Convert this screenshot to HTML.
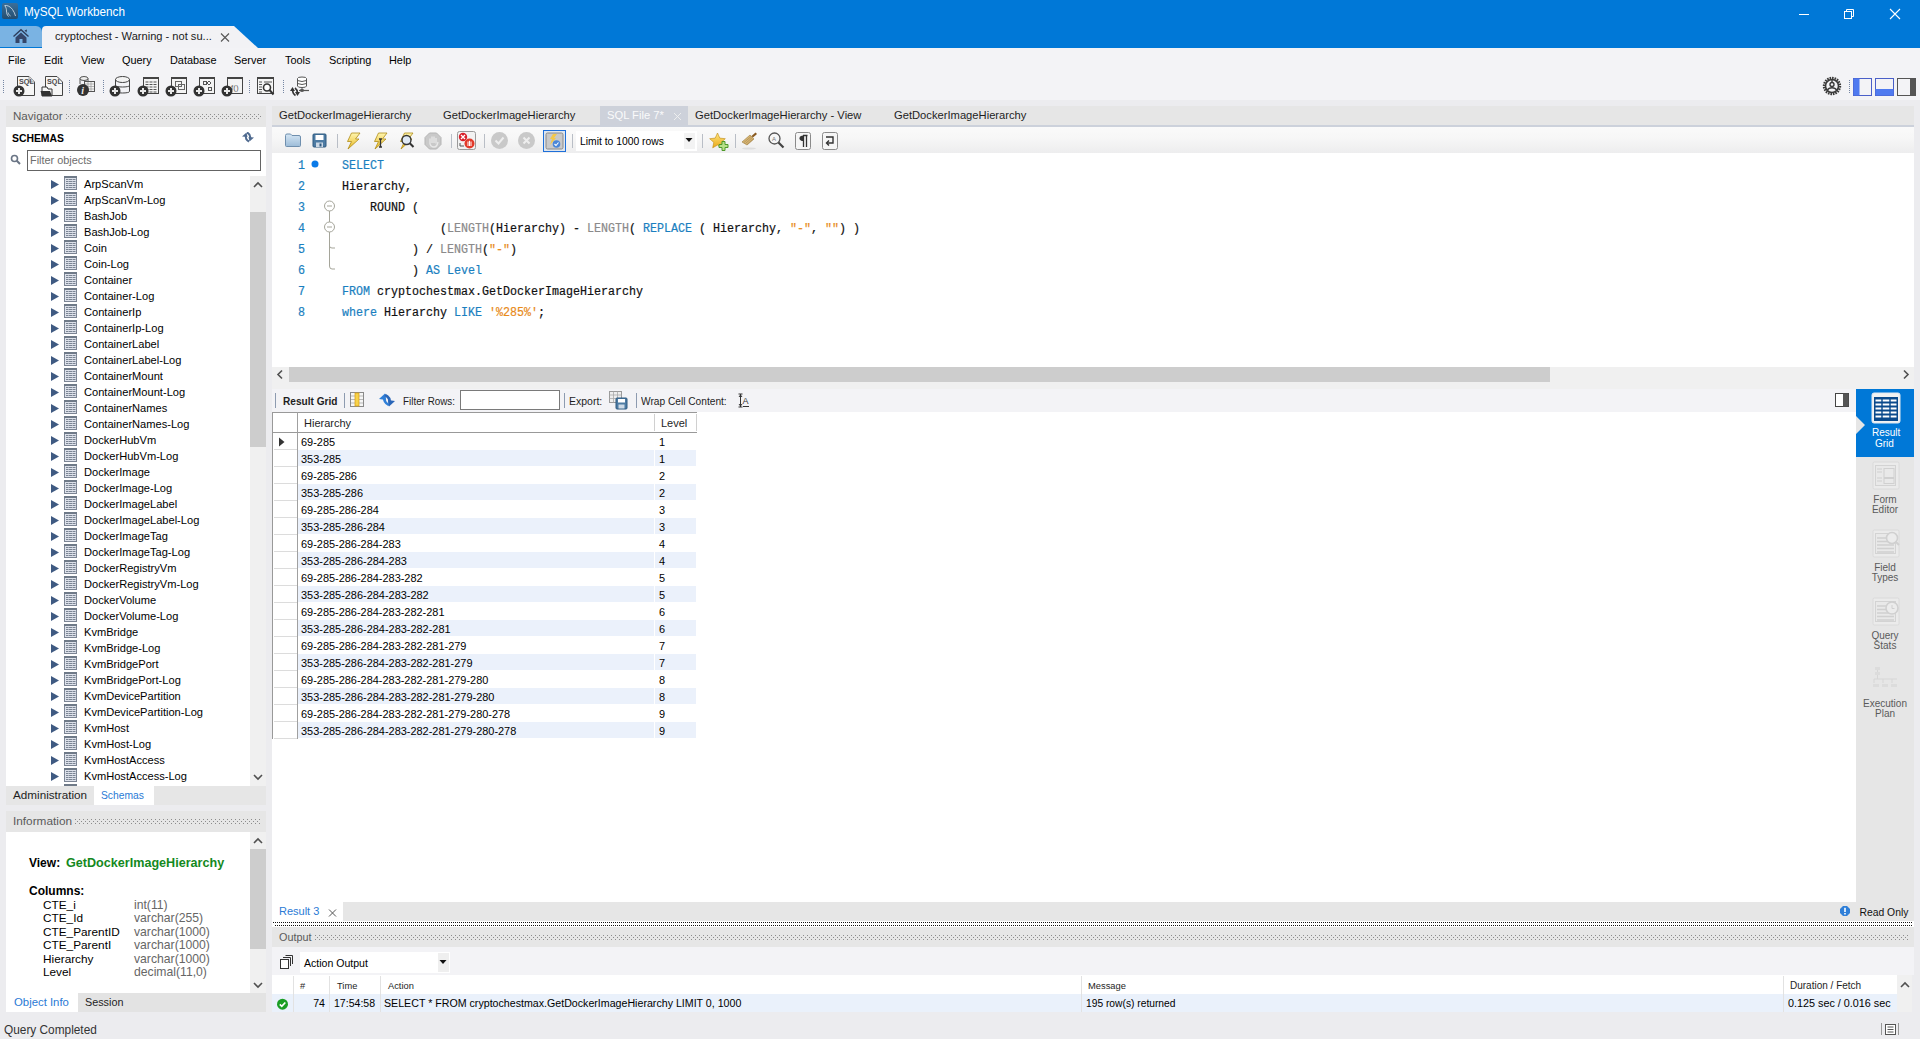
<!DOCTYPE html>
<html><head><meta charset="utf-8">
<style>
*{margin:0;padding:0;box-sizing:border-box}
html,body{width:1920px;height:1039px;overflow:hidden;background:#ececef;font-family:"Liberation Sans",sans-serif;font-size:11px;color:#000;position:relative}
.a{position:absolute}
.t{position:absolute;white-space:pre;line-height:1}
.dots{background-image:radial-gradient(circle,#b8b8b8 0.7px,transparent 0.8px);background-size:3px 3px}
</style></head><body>
<svg width="0" height="0" style="position:absolute"><defs><pattern id="dp" width="4" height="4" patternUnits="userSpaceOnUse"><rect x="0" y="0" width="1" height="1" fill="#8c8c8c"/><rect x="2" y="2" width="1" height="1" fill="#8c8c8c"/></pattern><pattern id="sd1" width="2" height="1" patternUnits="userSpaceOnUse"><rect width="1" height="1" fill="#111"/></pattern></defs></svg>
<div class="a" style="left:0px;top:0px;width:1920px;height:48px;background:#0078d7;"></div>
<svg class="a" style="left:2px;top:3px;" width="16" height="16" viewBox="0 0 16 16"><defs><linearGradient id="ai" x1="0" y1="0" x2="0" y2="1"><stop offset="0" stop-color="#3b6f9a"/><stop offset="1" stop-color="#254e6f"/></linearGradient></defs><rect x="0" y="0" width="16" height="16" rx="2" fill="url(#ai)"/><path d="M2.5 2.5C5 2 8.5 3.5 10.5 6.5C12 8.5 13 11 13.5 13M3 3C4 4.5 4.5 6 4.5 8C4.5 10 5 12 6.5 13.5M6 9.5C6.5 11 7.5 12.5 8.5 13" stroke="#dde8f0" stroke-width="0.8" fill="none"/></svg>
<div class="t" style="left:23.50px;top:6px;font-size:12.5px;color:#fff;transform:scaleX(0.938);transform-origin:0 0;">MySQL Workbench</div>
<div class="a" style="left:1799px;top:14px;width:10px;height:1px;background:#fff;"></div>
<svg class="a" style="left:1843px;top:8px;" width="12" height="12" viewBox="0 0 12 12"><rect x="1.5" y="3.5" width="7" height="7" fill="none" stroke="#fff"/><path d="M3.5 3.5V1.5H10.5V8.5H8.5" fill="none" stroke="#fff"/></svg>
<svg class="a" style="left:1889px;top:8px;" width="12" height="12" viewBox="0 0 12 12"><path d="M1 1L11 11M11 1L1 11" stroke="#fff" stroke-width="1.1"/></svg>
<div class="a" style="left:0px;top:26px;width:42px;height:21px;background:#7ab3e3;border-top-right-radius:6px"></div>
<svg class="a" style="left:12px;top:28px;" width="18" height="16" viewBox="0 0 18 16"><path d="M1.5 8.5L9 1.8L16.5 8.5" fill="none" stroke="#2d3d5c" stroke-width="1.4"/><path d="M12.5 2.5L15 1.5L14.5 4.5Z" fill="#2d3d5c"/><path d="M9 4.5L3.5 9.5V15H7.5V11H10.5V15H14.5V9.5Z" fill="#34466a"/></svg>
<div class="a" style="left:42px;top:26px;width:216px;height:22px;background:#f2f2f5;clip-path:polygon(0 0,192px 0,216px 22px,0 22px);border-top-left-radius:4px"></div>
<div class="t" style="left:55.00px;top:31px;font-size:11.1px;color:#1a1a1a;">cryptochest - Warning - not su...</div>
<svg class="a" style="left:220px;top:33px;" width="10" height="9" viewBox="0 0 10 9"><path d="M1 0.5L9 8.5M9 0.5L1 8.5" stroke="#555" stroke-width="1.1"/></svg>
<div class="a" style="left:0px;top:48px;width:1920px;height:52px;background:#f3f3f6;"></div>
<div class="t" style="left:8.00px;top:55px;font-size:10.9px;color:#000;">File</div>
<div class="t" style="left:44.00px;top:55px;font-size:10.9px;color:#000;">Edit</div>
<div class="t" style="left:81.00px;top:55px;font-size:10.9px;color:#000;">View</div>
<div class="t" style="left:122.00px;top:55px;font-size:10.9px;color:#000;">Query</div>
<div class="t" style="left:170.00px;top:55px;font-size:10.9px;color:#000;">Database</div>
<div class="t" style="left:234.00px;top:55px;font-size:10.9px;color:#000;">Server</div>
<div class="t" style="left:285.00px;top:55px;font-size:10.9px;color:#000;">Tools</div>
<div class="t" style="left:329.00px;top:55px;font-size:10.9px;color:#000;">Scripting</div>
<div class="t" style="left:389.00px;top:55px;font-size:10.9px;color:#000;">Help</div>
<div class="a" style="left:3px;top:80px;width:1px;height:14px;background-image:linear-gradient(#7586a3 50%,transparent 50%);background-size:1px 2px"></div>
<svg class="a" style="left:12px;top:75px;" width="24" height="23" viewBox="0 0 24 23"><path d="M5.5 1.5H17L22.5 7V20.5H5.5Z" fill="#f6f6f6" stroke="#444"/><path d="M17 1.5V7H22.5" fill="#ddd" stroke="#888" stroke-width="0.8"/><text x="7" y="8.5" font-family="Liberation Sans" font-size="7.2" font-weight="bold" fill="#4a4a4a" style="-webkit-font-smoothing:antialiased">SQL</text><circle cx="7" cy="16" r="5.5" fill="#333"/><path d="M4 16H10M7 13V19" stroke="#e8e8e8" stroke-width="2"/></svg>
<svg class="a" style="left:40px;top:75px;" width="24" height="23" viewBox="0 0 24 23"><path d="M5.5 1.5H17L22.5 7V20.5H5.5Z" fill="#f6f6f6" stroke="#444"/><text x="7" y="8.5" font-family="Liberation Sans" font-size="7.2" font-weight="bold" fill="#4a4a4a" style="-webkit-font-smoothing:antialiased">SQL</text><path d="M2 12H7L8 14H12V21H2Z" fill="#f6f6f6" stroke="#333"/><path d="M0.5 16H10L12 21H2Z" fill="#333"/></svg>
<div class="a" style="left:69px;top:80px;width:1px;height:14px;background-image:linear-gradient(#7586a3 50%,transparent 50%);background-size:1px 2px"></div>
<svg class="a" style="left:74px;top:75px;" width="24" height="23" viewBox="0 0 24 23"><ellipse cx="10" cy="3.5" rx="4" ry="2" fill="#eee" stroke="#555"/><path d="M6 3.5V9M14 3.5V9" stroke="#555"/><rect x="10.5" y="6.5" width="10" height="10" fill="#f4f4f4" stroke="#555"/><path d="M11 9H20M11 11.5H20M11 14H20M14 7V16M17 7V16" stroke="#999" stroke-width="0.7"/><circle cx="9" cy="15" r="6" fill="#333"/><text x="7.3" y="19" font-family="Liberation Serif" font-style="italic" font-weight="bold" font-size="10" fill="#eee">i</text></svg>
<div class="a" style="left:103px;top:80px;width:1px;height:14px;background-image:linear-gradient(#7586a3 50%,transparent 50%);background-size:1px 2px"></div>
<svg class="a" style="left:108px;top:75px;" width="24" height="23" viewBox="0 0 24 23"><ellipse cx="14.5" cy="4.5" rx="7" ry="3" fill="#f2f2f2" stroke="#444"/><path d="M7.5 4.5V16.5C7.5 18.5 21.5 18.5 21.5 16.5V4.5M7.5 10.5C7.5 12.5 21.5 12.5 21.5 10.5" fill="none" stroke="#444"/><circle cx="7" cy="16" r="5.5" fill="#333"/><path d="M4 16H10M7 13V19" stroke="#e8e8e8" stroke-width="2"/></svg>
<svg class="a" style="left:136px;top:75px;" width="24" height="23" viewBox="0 0 24 23"><rect x="7.5" y="2.5" width="15" height="16" fill="#f4f4f4" stroke="#444"/><rect x="7" y="2" width="16" height="2" fill="#444"/><path d="M9.5 7H21M9.5 9.5H21M9.5 12H21M9.5 14.5H21M9.5 17H21" stroke="#555" stroke-width="1" stroke-dasharray="3 1 3 1 3"/><circle cx="7" cy="16" r="5.5" fill="#333"/><path d="M4 16H10M7 13V19" stroke="#e8e8e8" stroke-width="2"/></svg>
<svg class="a" style="left:164px;top:75px;" width="24" height="23" viewBox="0 0 24 23"><rect x="7.5" y="2.5" width="15" height="16" fill="#f4f4f4" stroke="#444"/><rect x="7" y="2" width="16" height="2" fill="#444"/><rect x="11.5" y="6.5" width="6" height="5" fill="none" stroke="#666"/><rect x="14.5" y="9.5" width="6" height="5" fill="none" stroke="#666"/><circle cx="7" cy="16" r="5.5" fill="#333"/><path d="M4 16H10M7 13V19" stroke="#e8e8e8" stroke-width="2"/></svg>
<svg class="a" style="left:192px;top:75px;" width="24" height="23" viewBox="0 0 24 23"><rect x="7.5" y="2.5" width="15" height="16" fill="#f4f4f4" stroke="#444"/><rect x="7" y="2" width="16" height="2" fill="#444"/><rect x="11.5" y="6.5" width="3" height="3" fill="none" stroke="#555"/><path d="M17 6L19 8L17 10L15 8Z" fill="none" stroke="#555"/><rect x="16.5" y="12.5" width="3" height="3" fill="none" stroke="#555"/><circle cx="7" cy="16" r="5.5" fill="#333"/><path d="M4 16H10M7 13V19" stroke="#e8e8e8" stroke-width="2"/></svg>
<svg class="a" style="left:220px;top:75px;" width="24" height="23" viewBox="0 0 24 23"><rect x="7.5" y="2.5" width="15" height="16" fill="#f4f4f4" stroke="#444"/><rect x="7" y="2" width="16" height="2" fill="#444"/><text x="11" y="15" font-family="Liberation Sans" font-size="8" fill="#666">f()</text><circle cx="7" cy="16" r="5.5" fill="#333"/><path d="M4 16H10M7 13V19" stroke="#e8e8e8" stroke-width="2"/></svg>
<div class="a" style="left:249px;top:80px;width:1px;height:14px;background-image:linear-gradient(#7586a3 50%,transparent 50%);background-size:1px 2px"></div>
<svg class="a" style="left:254px;top:75px;" width="24" height="23" viewBox="0 0 24 23"><rect x="3.5" y="2.5" width="16" height="16" fill="#f4f4f4" stroke="#444"/><rect x="3" y="2" width="17" height="2" fill="#444"/><path d="M5 7H8M5 9.5H8M5 12H8M5 14.5H8M5 17H8M10 7H18" stroke="#555"/><circle cx="13" cy="12.5" r="3.5" fill="#fff" stroke="#333" stroke-width="1.6"/><path d="M15.5 15L19.5 19.5" stroke="#333" stroke-width="2"/></svg>
<div class="a" style="left:283px;top:80px;width:1px;height:14px;background-image:linear-gradient(#7586a3 50%,transparent 50%);background-size:1px 2px"></div>
<svg class="a" style="left:287px;top:75px;" width="24" height="23" viewBox="0 0 24 23"><path d="M10.5 3.5Q10.5 2 15 2Q19.5 2 19.5 3.5V11Q19.5 12.5 15 12.5Q10.5 12.5 10.5 11Z" fill="#fff" stroke="#555"/><path d="M10.5 5.5Q15 7.5 19.5 5.5M10.5 8.5Q15 10.5 19.5 8.5" fill="none" stroke="#555"/><path d="M15 12.5V15" stroke="#555"/><path d="M12 15.5H22" stroke="#555" stroke-width="1.2"/><ellipse cx="15" cy="15.5" rx="2.2" ry="1.4" fill="#555"/><path d="M3 16L5.5 12L8 16Z" fill="#333"/><path d="M5.5 15Q5.8 19 8.5 20.5" fill="none" stroke="#333" stroke-width="1.6"/><path d="M8 17L10.5 21L13 17Z" fill="#333"/><path d="M10.5 18Q10.2 14.5 8 13" fill="none" stroke="#333" stroke-width="1.6"/></svg>
<svg class="a" style="left:1822px;top:76px;" width="20" height="20" viewBox="0 0 20 20"><circle cx="10" cy="10" r="8" fill="none" stroke="#3a3a3a" stroke-width="2.4" stroke-dasharray="1.6 0.9"/><circle cx="10" cy="10" r="6.5" fill="none" stroke="#3a3a3a" stroke-width="1.6"/><circle cx="10" cy="8.5" r="2" fill="none" stroke="#3a3a3a" stroke-width="1.4"/><path d="M10 3.5V6.5M5.5 14C7 11 13 11 14.5 14" fill="none" stroke="#3a3a3a" stroke-width="1.4"/></svg>
<div class="a" style="left:1849px;top:80px;width:1px;height:14px;background-image:linear-gradient(#7586a3 50%,transparent 50%);background-size:1px 2px"></div>
<svg class="a" style="left:1852px;top:77px;" width="22" height="20" viewBox="0 0 22 20"><rect x="1" y="1" width="19" height="18" fill="#fff"/><rect x="1.5" y="1.5" width="18" height="17" fill="#f3f3f6" stroke="#4a5fc8"/><rect x="1.5" y="1.5" width="6" height="17" fill="#4f7af0"/></svg>
<svg class="a" style="left:1874px;top:77px;" width="22" height="20" viewBox="0 0 22 20"><rect x="1" y="1" width="19" height="18" fill="#fff"/><rect x="1.5" y="1.5" width="18" height="17" fill="#f3f3f6" stroke="#4a5fc8"/><rect x="1.5" y="12" width="18" height="6.5" fill="#4f7af0"/></svg>
<svg class="a" style="left:1896px;top:77px;" width="22" height="20" viewBox="0 0 22 20"><rect x="1" y="1" width="19" height="18" fill="#fff"/><rect x="1.5" y="1.5" width="18" height="17" fill="#f3f3f6" stroke="#555"/><rect x="14" y="1.5" width="5.5" height="17" fill="#555"/></svg>
<div class="a" style="left:6px;top:106px;width:260px;height:21px;background:#e6e6e6;"></div>
<div class="t" style="left:13.00px;top:110px;font-size:11.6px;color:#5a5a5a;">Navigator</div>
<svg class="a" style="left:65.6px;top:114px;" width="195.4" height="5" viewBox="0 0 195.4 5"><rect width="195" height="5" fill="url(#dp)"/></svg>
<div class="a" style="left:6px;top:127px;width:260px;height:659px;background:#fff;"></div>
<div class="t" style="left:12.00px;top:134px;font-size:10.4px;color:#000;font-weight:bold;">SCHEMAS</div>
<svg class="a" style="left:241px;top:132px;" width="14" height="11" viewBox="0 0 14 11"><path d="M1 4.5L5.5 0.5L6.5 5Z" fill="#4f6a8f"/><path d="M5 3.5Q4 7.5 8 9.5" fill="none" stroke="#4f6a8f" stroke-width="2"/><path d="M13 5.5L8.5 9.5L7.5 5Z" fill="#4f6a8f"/><path d="M9 6.5Q10 2.5 6 0.5" fill="none" stroke="#4f6a8f" stroke-width="2"/></svg>
<svg class="a" style="left:10px;top:154px;" width="11" height="11" viewBox="0 0 11 11"><circle cx="4.5" cy="4.5" r="3" fill="none" stroke="#6a7585" stroke-width="1.6"/><path d="M6.8 6.8L10 10" stroke="#6a7585" stroke-width="2"/></svg>
<div class="a" style="left:27px;top:150px;width:234px;height:21px;border:1px solid #646464;background:#fff"></div>
<div class="t" style="left:30.00px;top:155px;font-size:10.9px;color:#6d6d6d;">Filter objects</div>
<svg class="a" style="left:51px;top:180px;" width="9" height="10" viewBox="0 0 9 10"><path d="M0 0L8 4.5L0 9Z" fill="#3f5a82"/></svg>
<svg class="a" style="left:64px;top:176px;" width="13" height="14" viewBox="0 0 13 14"><rect x="0.5" y="0.5" width="12" height="13" fill="#dde1ea" stroke="#7c8594"/><rect x="0" y="0" width="13" height="2" fill="#6f7a88"/><path d="M2 3.5H12M2 5.5H12M2 7.5H12M2 9.5H12M2 11.5H12" stroke="#7b8594" stroke-width="1" stroke-dasharray="2.5 0.5 3 0.5 3"/></svg>
<div class="t" style="left:84.00px;top:179px;font-size:11.1px;color:#000;">ArpScanVm</div>
<svg class="a" style="left:51px;top:196px;" width="9" height="10" viewBox="0 0 9 10"><path d="M0 0L8 4.5L0 9Z" fill="#3f5a82"/></svg>
<svg class="a" style="left:64px;top:192px;" width="13" height="14" viewBox="0 0 13 14"><rect x="0.5" y="0.5" width="12" height="13" fill="#dde1ea" stroke="#7c8594"/><rect x="0" y="0" width="13" height="2" fill="#6f7a88"/><path d="M2 3.5H12M2 5.5H12M2 7.5H12M2 9.5H12M2 11.5H12" stroke="#7b8594" stroke-width="1" stroke-dasharray="2.5 0.5 3 0.5 3"/></svg>
<div class="t" style="left:84.00px;top:195px;font-size:11.1px;color:#000;">ArpScanVm-Log</div>
<svg class="a" style="left:51px;top:212px;" width="9" height="10" viewBox="0 0 9 10"><path d="M0 0L8 4.5L0 9Z" fill="#3f5a82"/></svg>
<svg class="a" style="left:64px;top:208px;" width="13" height="14" viewBox="0 0 13 14"><rect x="0.5" y="0.5" width="12" height="13" fill="#dde1ea" stroke="#7c8594"/><rect x="0" y="0" width="13" height="2" fill="#6f7a88"/><path d="M2 3.5H12M2 5.5H12M2 7.5H12M2 9.5H12M2 11.5H12" stroke="#7b8594" stroke-width="1" stroke-dasharray="2.5 0.5 3 0.5 3"/></svg>
<div class="t" style="left:84.00px;top:211px;font-size:11.1px;color:#000;">BashJob</div>
<svg class="a" style="left:51px;top:228px;" width="9" height="10" viewBox="0 0 9 10"><path d="M0 0L8 4.5L0 9Z" fill="#3f5a82"/></svg>
<svg class="a" style="left:64px;top:224px;" width="13" height="14" viewBox="0 0 13 14"><rect x="0.5" y="0.5" width="12" height="13" fill="#dde1ea" stroke="#7c8594"/><rect x="0" y="0" width="13" height="2" fill="#6f7a88"/><path d="M2 3.5H12M2 5.5H12M2 7.5H12M2 9.5H12M2 11.5H12" stroke="#7b8594" stroke-width="1" stroke-dasharray="2.5 0.5 3 0.5 3"/></svg>
<div class="t" style="left:84.00px;top:227px;font-size:11.1px;color:#000;">BashJob-Log</div>
<svg class="a" style="left:51px;top:244px;" width="9" height="10" viewBox="0 0 9 10"><path d="M0 0L8 4.5L0 9Z" fill="#3f5a82"/></svg>
<svg class="a" style="left:64px;top:240px;" width="13" height="14" viewBox="0 0 13 14"><rect x="0.5" y="0.5" width="12" height="13" fill="#dde1ea" stroke="#7c8594"/><rect x="0" y="0" width="13" height="2" fill="#6f7a88"/><path d="M2 3.5H12M2 5.5H12M2 7.5H12M2 9.5H12M2 11.5H12" stroke="#7b8594" stroke-width="1" stroke-dasharray="2.5 0.5 3 0.5 3"/></svg>
<div class="t" style="left:84.00px;top:243px;font-size:11.1px;color:#000;">Coin</div>
<svg class="a" style="left:51px;top:260px;" width="9" height="10" viewBox="0 0 9 10"><path d="M0 0L8 4.5L0 9Z" fill="#3f5a82"/></svg>
<svg class="a" style="left:64px;top:256px;" width="13" height="14" viewBox="0 0 13 14"><rect x="0.5" y="0.5" width="12" height="13" fill="#dde1ea" stroke="#7c8594"/><rect x="0" y="0" width="13" height="2" fill="#6f7a88"/><path d="M2 3.5H12M2 5.5H12M2 7.5H12M2 9.5H12M2 11.5H12" stroke="#7b8594" stroke-width="1" stroke-dasharray="2.5 0.5 3 0.5 3"/></svg>
<div class="t" style="left:84.00px;top:259px;font-size:11.1px;color:#000;">Coin-Log</div>
<svg class="a" style="left:51px;top:276px;" width="9" height="10" viewBox="0 0 9 10"><path d="M0 0L8 4.5L0 9Z" fill="#3f5a82"/></svg>
<svg class="a" style="left:64px;top:272px;" width="13" height="14" viewBox="0 0 13 14"><rect x="0.5" y="0.5" width="12" height="13" fill="#dde1ea" stroke="#7c8594"/><rect x="0" y="0" width="13" height="2" fill="#6f7a88"/><path d="M2 3.5H12M2 5.5H12M2 7.5H12M2 9.5H12M2 11.5H12" stroke="#7b8594" stroke-width="1" stroke-dasharray="2.5 0.5 3 0.5 3"/></svg>
<div class="t" style="left:84.00px;top:275px;font-size:11.1px;color:#000;">Container</div>
<svg class="a" style="left:51px;top:292px;" width="9" height="10" viewBox="0 0 9 10"><path d="M0 0L8 4.5L0 9Z" fill="#3f5a82"/></svg>
<svg class="a" style="left:64px;top:288px;" width="13" height="14" viewBox="0 0 13 14"><rect x="0.5" y="0.5" width="12" height="13" fill="#dde1ea" stroke="#7c8594"/><rect x="0" y="0" width="13" height="2" fill="#6f7a88"/><path d="M2 3.5H12M2 5.5H12M2 7.5H12M2 9.5H12M2 11.5H12" stroke="#7b8594" stroke-width="1" stroke-dasharray="2.5 0.5 3 0.5 3"/></svg>
<div class="t" style="left:84.00px;top:291px;font-size:11.1px;color:#000;">Container-Log</div>
<svg class="a" style="left:51px;top:308px;" width="9" height="10" viewBox="0 0 9 10"><path d="M0 0L8 4.5L0 9Z" fill="#3f5a82"/></svg>
<svg class="a" style="left:64px;top:304px;" width="13" height="14" viewBox="0 0 13 14"><rect x="0.5" y="0.5" width="12" height="13" fill="#dde1ea" stroke="#7c8594"/><rect x="0" y="0" width="13" height="2" fill="#6f7a88"/><path d="M2 3.5H12M2 5.5H12M2 7.5H12M2 9.5H12M2 11.5H12" stroke="#7b8594" stroke-width="1" stroke-dasharray="2.5 0.5 3 0.5 3"/></svg>
<div class="t" style="left:84.00px;top:307px;font-size:11.1px;color:#000;">ContainerIp</div>
<svg class="a" style="left:51px;top:324px;" width="9" height="10" viewBox="0 0 9 10"><path d="M0 0L8 4.5L0 9Z" fill="#3f5a82"/></svg>
<svg class="a" style="left:64px;top:320px;" width="13" height="14" viewBox="0 0 13 14"><rect x="0.5" y="0.5" width="12" height="13" fill="#dde1ea" stroke="#7c8594"/><rect x="0" y="0" width="13" height="2" fill="#6f7a88"/><path d="M2 3.5H12M2 5.5H12M2 7.5H12M2 9.5H12M2 11.5H12" stroke="#7b8594" stroke-width="1" stroke-dasharray="2.5 0.5 3 0.5 3"/></svg>
<div class="t" style="left:84.00px;top:323px;font-size:11.1px;color:#000;">ContainerIp-Log</div>
<svg class="a" style="left:51px;top:340px;" width="9" height="10" viewBox="0 0 9 10"><path d="M0 0L8 4.5L0 9Z" fill="#3f5a82"/></svg>
<svg class="a" style="left:64px;top:336px;" width="13" height="14" viewBox="0 0 13 14"><rect x="0.5" y="0.5" width="12" height="13" fill="#dde1ea" stroke="#7c8594"/><rect x="0" y="0" width="13" height="2" fill="#6f7a88"/><path d="M2 3.5H12M2 5.5H12M2 7.5H12M2 9.5H12M2 11.5H12" stroke="#7b8594" stroke-width="1" stroke-dasharray="2.5 0.5 3 0.5 3"/></svg>
<div class="t" style="left:84.00px;top:339px;font-size:11.1px;color:#000;">ContainerLabel</div>
<svg class="a" style="left:51px;top:356px;" width="9" height="10" viewBox="0 0 9 10"><path d="M0 0L8 4.5L0 9Z" fill="#3f5a82"/></svg>
<svg class="a" style="left:64px;top:352px;" width="13" height="14" viewBox="0 0 13 14"><rect x="0.5" y="0.5" width="12" height="13" fill="#dde1ea" stroke="#7c8594"/><rect x="0" y="0" width="13" height="2" fill="#6f7a88"/><path d="M2 3.5H12M2 5.5H12M2 7.5H12M2 9.5H12M2 11.5H12" stroke="#7b8594" stroke-width="1" stroke-dasharray="2.5 0.5 3 0.5 3"/></svg>
<div class="t" style="left:84.00px;top:355px;font-size:11.1px;color:#000;">ContainerLabel-Log</div>
<svg class="a" style="left:51px;top:372px;" width="9" height="10" viewBox="0 0 9 10"><path d="M0 0L8 4.5L0 9Z" fill="#3f5a82"/></svg>
<svg class="a" style="left:64px;top:368px;" width="13" height="14" viewBox="0 0 13 14"><rect x="0.5" y="0.5" width="12" height="13" fill="#dde1ea" stroke="#7c8594"/><rect x="0" y="0" width="13" height="2" fill="#6f7a88"/><path d="M2 3.5H12M2 5.5H12M2 7.5H12M2 9.5H12M2 11.5H12" stroke="#7b8594" stroke-width="1" stroke-dasharray="2.5 0.5 3 0.5 3"/></svg>
<div class="t" style="left:84.00px;top:371px;font-size:11.1px;color:#000;">ContainerMount</div>
<svg class="a" style="left:51px;top:388px;" width="9" height="10" viewBox="0 0 9 10"><path d="M0 0L8 4.5L0 9Z" fill="#3f5a82"/></svg>
<svg class="a" style="left:64px;top:384px;" width="13" height="14" viewBox="0 0 13 14"><rect x="0.5" y="0.5" width="12" height="13" fill="#dde1ea" stroke="#7c8594"/><rect x="0" y="0" width="13" height="2" fill="#6f7a88"/><path d="M2 3.5H12M2 5.5H12M2 7.5H12M2 9.5H12M2 11.5H12" stroke="#7b8594" stroke-width="1" stroke-dasharray="2.5 0.5 3 0.5 3"/></svg>
<div class="t" style="left:84.00px;top:387px;font-size:11.1px;color:#000;">ContainerMount-Log</div>
<svg class="a" style="left:51px;top:404px;" width="9" height="10" viewBox="0 0 9 10"><path d="M0 0L8 4.5L0 9Z" fill="#3f5a82"/></svg>
<svg class="a" style="left:64px;top:400px;" width="13" height="14" viewBox="0 0 13 14"><rect x="0.5" y="0.5" width="12" height="13" fill="#dde1ea" stroke="#7c8594"/><rect x="0" y="0" width="13" height="2" fill="#6f7a88"/><path d="M2 3.5H12M2 5.5H12M2 7.5H12M2 9.5H12M2 11.5H12" stroke="#7b8594" stroke-width="1" stroke-dasharray="2.5 0.5 3 0.5 3"/></svg>
<div class="t" style="left:84.00px;top:403px;font-size:11.1px;color:#000;">ContainerNames</div>
<svg class="a" style="left:51px;top:420px;" width="9" height="10" viewBox="0 0 9 10"><path d="M0 0L8 4.5L0 9Z" fill="#3f5a82"/></svg>
<svg class="a" style="left:64px;top:416px;" width="13" height="14" viewBox="0 0 13 14"><rect x="0.5" y="0.5" width="12" height="13" fill="#dde1ea" stroke="#7c8594"/><rect x="0" y="0" width="13" height="2" fill="#6f7a88"/><path d="M2 3.5H12M2 5.5H12M2 7.5H12M2 9.5H12M2 11.5H12" stroke="#7b8594" stroke-width="1" stroke-dasharray="2.5 0.5 3 0.5 3"/></svg>
<div class="t" style="left:84.00px;top:419px;font-size:11.1px;color:#000;">ContainerNames-Log</div>
<svg class="a" style="left:51px;top:436px;" width="9" height="10" viewBox="0 0 9 10"><path d="M0 0L8 4.5L0 9Z" fill="#3f5a82"/></svg>
<svg class="a" style="left:64px;top:432px;" width="13" height="14" viewBox="0 0 13 14"><rect x="0.5" y="0.5" width="12" height="13" fill="#dde1ea" stroke="#7c8594"/><rect x="0" y="0" width="13" height="2" fill="#6f7a88"/><path d="M2 3.5H12M2 5.5H12M2 7.5H12M2 9.5H12M2 11.5H12" stroke="#7b8594" stroke-width="1" stroke-dasharray="2.5 0.5 3 0.5 3"/></svg>
<div class="t" style="left:84.00px;top:435px;font-size:11.1px;color:#000;">DockerHubVm</div>
<svg class="a" style="left:51px;top:452px;" width="9" height="10" viewBox="0 0 9 10"><path d="M0 0L8 4.5L0 9Z" fill="#3f5a82"/></svg>
<svg class="a" style="left:64px;top:448px;" width="13" height="14" viewBox="0 0 13 14"><rect x="0.5" y="0.5" width="12" height="13" fill="#dde1ea" stroke="#7c8594"/><rect x="0" y="0" width="13" height="2" fill="#6f7a88"/><path d="M2 3.5H12M2 5.5H12M2 7.5H12M2 9.5H12M2 11.5H12" stroke="#7b8594" stroke-width="1" stroke-dasharray="2.5 0.5 3 0.5 3"/></svg>
<div class="t" style="left:84.00px;top:451px;font-size:11.1px;color:#000;">DockerHubVm-Log</div>
<svg class="a" style="left:51px;top:468px;" width="9" height="10" viewBox="0 0 9 10"><path d="M0 0L8 4.5L0 9Z" fill="#3f5a82"/></svg>
<svg class="a" style="left:64px;top:464px;" width="13" height="14" viewBox="0 0 13 14"><rect x="0.5" y="0.5" width="12" height="13" fill="#dde1ea" stroke="#7c8594"/><rect x="0" y="0" width="13" height="2" fill="#6f7a88"/><path d="M2 3.5H12M2 5.5H12M2 7.5H12M2 9.5H12M2 11.5H12" stroke="#7b8594" stroke-width="1" stroke-dasharray="2.5 0.5 3 0.5 3"/></svg>
<div class="t" style="left:84.00px;top:467px;font-size:11.1px;color:#000;">DockerImage</div>
<svg class="a" style="left:51px;top:484px;" width="9" height="10" viewBox="0 0 9 10"><path d="M0 0L8 4.5L0 9Z" fill="#3f5a82"/></svg>
<svg class="a" style="left:64px;top:480px;" width="13" height="14" viewBox="0 0 13 14"><rect x="0.5" y="0.5" width="12" height="13" fill="#dde1ea" stroke="#7c8594"/><rect x="0" y="0" width="13" height="2" fill="#6f7a88"/><path d="M2 3.5H12M2 5.5H12M2 7.5H12M2 9.5H12M2 11.5H12" stroke="#7b8594" stroke-width="1" stroke-dasharray="2.5 0.5 3 0.5 3"/></svg>
<div class="t" style="left:84.00px;top:483px;font-size:11.1px;color:#000;">DockerImage-Log</div>
<svg class="a" style="left:51px;top:500px;" width="9" height="10" viewBox="0 0 9 10"><path d="M0 0L8 4.5L0 9Z" fill="#3f5a82"/></svg>
<svg class="a" style="left:64px;top:496px;" width="13" height="14" viewBox="0 0 13 14"><rect x="0.5" y="0.5" width="12" height="13" fill="#dde1ea" stroke="#7c8594"/><rect x="0" y="0" width="13" height="2" fill="#6f7a88"/><path d="M2 3.5H12M2 5.5H12M2 7.5H12M2 9.5H12M2 11.5H12" stroke="#7b8594" stroke-width="1" stroke-dasharray="2.5 0.5 3 0.5 3"/></svg>
<div class="t" style="left:84.00px;top:499px;font-size:11.1px;color:#000;">DockerImageLabel</div>
<svg class="a" style="left:51px;top:516px;" width="9" height="10" viewBox="0 0 9 10"><path d="M0 0L8 4.5L0 9Z" fill="#3f5a82"/></svg>
<svg class="a" style="left:64px;top:512px;" width="13" height="14" viewBox="0 0 13 14"><rect x="0.5" y="0.5" width="12" height="13" fill="#dde1ea" stroke="#7c8594"/><rect x="0" y="0" width="13" height="2" fill="#6f7a88"/><path d="M2 3.5H12M2 5.5H12M2 7.5H12M2 9.5H12M2 11.5H12" stroke="#7b8594" stroke-width="1" stroke-dasharray="2.5 0.5 3 0.5 3"/></svg>
<div class="t" style="left:84.00px;top:515px;font-size:11.1px;color:#000;">DockerImageLabel-Log</div>
<svg class="a" style="left:51px;top:532px;" width="9" height="10" viewBox="0 0 9 10"><path d="M0 0L8 4.5L0 9Z" fill="#3f5a82"/></svg>
<svg class="a" style="left:64px;top:528px;" width="13" height="14" viewBox="0 0 13 14"><rect x="0.5" y="0.5" width="12" height="13" fill="#dde1ea" stroke="#7c8594"/><rect x="0" y="0" width="13" height="2" fill="#6f7a88"/><path d="M2 3.5H12M2 5.5H12M2 7.5H12M2 9.5H12M2 11.5H12" stroke="#7b8594" stroke-width="1" stroke-dasharray="2.5 0.5 3 0.5 3"/></svg>
<div class="t" style="left:84.00px;top:531px;font-size:11.1px;color:#000;">DockerImageTag</div>
<svg class="a" style="left:51px;top:548px;" width="9" height="10" viewBox="0 0 9 10"><path d="M0 0L8 4.5L0 9Z" fill="#3f5a82"/></svg>
<svg class="a" style="left:64px;top:544px;" width="13" height="14" viewBox="0 0 13 14"><rect x="0.5" y="0.5" width="12" height="13" fill="#dde1ea" stroke="#7c8594"/><rect x="0" y="0" width="13" height="2" fill="#6f7a88"/><path d="M2 3.5H12M2 5.5H12M2 7.5H12M2 9.5H12M2 11.5H12" stroke="#7b8594" stroke-width="1" stroke-dasharray="2.5 0.5 3 0.5 3"/></svg>
<div class="t" style="left:84.00px;top:547px;font-size:11.1px;color:#000;">DockerImageTag-Log</div>
<svg class="a" style="left:51px;top:564px;" width="9" height="10" viewBox="0 0 9 10"><path d="M0 0L8 4.5L0 9Z" fill="#3f5a82"/></svg>
<svg class="a" style="left:64px;top:560px;" width="13" height="14" viewBox="0 0 13 14"><rect x="0.5" y="0.5" width="12" height="13" fill="#dde1ea" stroke="#7c8594"/><rect x="0" y="0" width="13" height="2" fill="#6f7a88"/><path d="M2 3.5H12M2 5.5H12M2 7.5H12M2 9.5H12M2 11.5H12" stroke="#7b8594" stroke-width="1" stroke-dasharray="2.5 0.5 3 0.5 3"/></svg>
<div class="t" style="left:84.00px;top:563px;font-size:11.1px;color:#000;">DockerRegistryVm</div>
<svg class="a" style="left:51px;top:580px;" width="9" height="10" viewBox="0 0 9 10"><path d="M0 0L8 4.5L0 9Z" fill="#3f5a82"/></svg>
<svg class="a" style="left:64px;top:576px;" width="13" height="14" viewBox="0 0 13 14"><rect x="0.5" y="0.5" width="12" height="13" fill="#dde1ea" stroke="#7c8594"/><rect x="0" y="0" width="13" height="2" fill="#6f7a88"/><path d="M2 3.5H12M2 5.5H12M2 7.5H12M2 9.5H12M2 11.5H12" stroke="#7b8594" stroke-width="1" stroke-dasharray="2.5 0.5 3 0.5 3"/></svg>
<div class="t" style="left:84.00px;top:579px;font-size:11.1px;color:#000;">DockerRegistryVm-Log</div>
<svg class="a" style="left:51px;top:596px;" width="9" height="10" viewBox="0 0 9 10"><path d="M0 0L8 4.5L0 9Z" fill="#3f5a82"/></svg>
<svg class="a" style="left:64px;top:592px;" width="13" height="14" viewBox="0 0 13 14"><rect x="0.5" y="0.5" width="12" height="13" fill="#dde1ea" stroke="#7c8594"/><rect x="0" y="0" width="13" height="2" fill="#6f7a88"/><path d="M2 3.5H12M2 5.5H12M2 7.5H12M2 9.5H12M2 11.5H12" stroke="#7b8594" stroke-width="1" stroke-dasharray="2.5 0.5 3 0.5 3"/></svg>
<div class="t" style="left:84.00px;top:595px;font-size:11.1px;color:#000;">DockerVolume</div>
<svg class="a" style="left:51px;top:612px;" width="9" height="10" viewBox="0 0 9 10"><path d="M0 0L8 4.5L0 9Z" fill="#3f5a82"/></svg>
<svg class="a" style="left:64px;top:608px;" width="13" height="14" viewBox="0 0 13 14"><rect x="0.5" y="0.5" width="12" height="13" fill="#dde1ea" stroke="#7c8594"/><rect x="0" y="0" width="13" height="2" fill="#6f7a88"/><path d="M2 3.5H12M2 5.5H12M2 7.5H12M2 9.5H12M2 11.5H12" stroke="#7b8594" stroke-width="1" stroke-dasharray="2.5 0.5 3 0.5 3"/></svg>
<div class="t" style="left:84.00px;top:611px;font-size:11.1px;color:#000;">DockerVolume-Log</div>
<svg class="a" style="left:51px;top:628px;" width="9" height="10" viewBox="0 0 9 10"><path d="M0 0L8 4.5L0 9Z" fill="#3f5a82"/></svg>
<svg class="a" style="left:64px;top:624px;" width="13" height="14" viewBox="0 0 13 14"><rect x="0.5" y="0.5" width="12" height="13" fill="#dde1ea" stroke="#7c8594"/><rect x="0" y="0" width="13" height="2" fill="#6f7a88"/><path d="M2 3.5H12M2 5.5H12M2 7.5H12M2 9.5H12M2 11.5H12" stroke="#7b8594" stroke-width="1" stroke-dasharray="2.5 0.5 3 0.5 3"/></svg>
<div class="t" style="left:84.00px;top:627px;font-size:11.1px;color:#000;">KvmBridge</div>
<svg class="a" style="left:51px;top:644px;" width="9" height="10" viewBox="0 0 9 10"><path d="M0 0L8 4.5L0 9Z" fill="#3f5a82"/></svg>
<svg class="a" style="left:64px;top:640px;" width="13" height="14" viewBox="0 0 13 14"><rect x="0.5" y="0.5" width="12" height="13" fill="#dde1ea" stroke="#7c8594"/><rect x="0" y="0" width="13" height="2" fill="#6f7a88"/><path d="M2 3.5H12M2 5.5H12M2 7.5H12M2 9.5H12M2 11.5H12" stroke="#7b8594" stroke-width="1" stroke-dasharray="2.5 0.5 3 0.5 3"/></svg>
<div class="t" style="left:84.00px;top:643px;font-size:11.1px;color:#000;">KvmBridge-Log</div>
<svg class="a" style="left:51px;top:660px;" width="9" height="10" viewBox="0 0 9 10"><path d="M0 0L8 4.5L0 9Z" fill="#3f5a82"/></svg>
<svg class="a" style="left:64px;top:656px;" width="13" height="14" viewBox="0 0 13 14"><rect x="0.5" y="0.5" width="12" height="13" fill="#dde1ea" stroke="#7c8594"/><rect x="0" y="0" width="13" height="2" fill="#6f7a88"/><path d="M2 3.5H12M2 5.5H12M2 7.5H12M2 9.5H12M2 11.5H12" stroke="#7b8594" stroke-width="1" stroke-dasharray="2.5 0.5 3 0.5 3"/></svg>
<div class="t" style="left:84.00px;top:659px;font-size:11.1px;color:#000;">KvmBridgePort</div>
<svg class="a" style="left:51px;top:676px;" width="9" height="10" viewBox="0 0 9 10"><path d="M0 0L8 4.5L0 9Z" fill="#3f5a82"/></svg>
<svg class="a" style="left:64px;top:672px;" width="13" height="14" viewBox="0 0 13 14"><rect x="0.5" y="0.5" width="12" height="13" fill="#dde1ea" stroke="#7c8594"/><rect x="0" y="0" width="13" height="2" fill="#6f7a88"/><path d="M2 3.5H12M2 5.5H12M2 7.5H12M2 9.5H12M2 11.5H12" stroke="#7b8594" stroke-width="1" stroke-dasharray="2.5 0.5 3 0.5 3"/></svg>
<div class="t" style="left:84.00px;top:675px;font-size:11.1px;color:#000;">KvmBridgePort-Log</div>
<svg class="a" style="left:51px;top:692px;" width="9" height="10" viewBox="0 0 9 10"><path d="M0 0L8 4.5L0 9Z" fill="#3f5a82"/></svg>
<svg class="a" style="left:64px;top:688px;" width="13" height="14" viewBox="0 0 13 14"><rect x="0.5" y="0.5" width="12" height="13" fill="#dde1ea" stroke="#7c8594"/><rect x="0" y="0" width="13" height="2" fill="#6f7a88"/><path d="M2 3.5H12M2 5.5H12M2 7.5H12M2 9.5H12M2 11.5H12" stroke="#7b8594" stroke-width="1" stroke-dasharray="2.5 0.5 3 0.5 3"/></svg>
<div class="t" style="left:84.00px;top:691px;font-size:11.1px;color:#000;">KvmDevicePartition</div>
<svg class="a" style="left:51px;top:708px;" width="9" height="10" viewBox="0 0 9 10"><path d="M0 0L8 4.5L0 9Z" fill="#3f5a82"/></svg>
<svg class="a" style="left:64px;top:704px;" width="13" height="14" viewBox="0 0 13 14"><rect x="0.5" y="0.5" width="12" height="13" fill="#dde1ea" stroke="#7c8594"/><rect x="0" y="0" width="13" height="2" fill="#6f7a88"/><path d="M2 3.5H12M2 5.5H12M2 7.5H12M2 9.5H12M2 11.5H12" stroke="#7b8594" stroke-width="1" stroke-dasharray="2.5 0.5 3 0.5 3"/></svg>
<div class="t" style="left:84.00px;top:707px;font-size:11.1px;color:#000;">KvmDevicePartition-Log</div>
<svg class="a" style="left:51px;top:724px;" width="9" height="10" viewBox="0 0 9 10"><path d="M0 0L8 4.5L0 9Z" fill="#3f5a82"/></svg>
<svg class="a" style="left:64px;top:720px;" width="13" height="14" viewBox="0 0 13 14"><rect x="0.5" y="0.5" width="12" height="13" fill="#dde1ea" stroke="#7c8594"/><rect x="0" y="0" width="13" height="2" fill="#6f7a88"/><path d="M2 3.5H12M2 5.5H12M2 7.5H12M2 9.5H12M2 11.5H12" stroke="#7b8594" stroke-width="1" stroke-dasharray="2.5 0.5 3 0.5 3"/></svg>
<div class="t" style="left:84.00px;top:723px;font-size:11.1px;color:#000;">KvmHost</div>
<svg class="a" style="left:51px;top:740px;" width="9" height="10" viewBox="0 0 9 10"><path d="M0 0L8 4.5L0 9Z" fill="#3f5a82"/></svg>
<svg class="a" style="left:64px;top:736px;" width="13" height="14" viewBox="0 0 13 14"><rect x="0.5" y="0.5" width="12" height="13" fill="#dde1ea" stroke="#7c8594"/><rect x="0" y="0" width="13" height="2" fill="#6f7a88"/><path d="M2 3.5H12M2 5.5H12M2 7.5H12M2 9.5H12M2 11.5H12" stroke="#7b8594" stroke-width="1" stroke-dasharray="2.5 0.5 3 0.5 3"/></svg>
<div class="t" style="left:84.00px;top:739px;font-size:11.1px;color:#000;">KvmHost-Log</div>
<svg class="a" style="left:51px;top:756px;" width="9" height="10" viewBox="0 0 9 10"><path d="M0 0L8 4.5L0 9Z" fill="#3f5a82"/></svg>
<svg class="a" style="left:64px;top:752px;" width="13" height="14" viewBox="0 0 13 14"><rect x="0.5" y="0.5" width="12" height="13" fill="#dde1ea" stroke="#7c8594"/><rect x="0" y="0" width="13" height="2" fill="#6f7a88"/><path d="M2 3.5H12M2 5.5H12M2 7.5H12M2 9.5H12M2 11.5H12" stroke="#7b8594" stroke-width="1" stroke-dasharray="2.5 0.5 3 0.5 3"/></svg>
<div class="t" style="left:84.00px;top:755px;font-size:11.1px;color:#000;">KvmHostAccess</div>
<svg class="a" style="left:51px;top:772px;" width="9" height="10" viewBox="0 0 9 10"><path d="M0 0L8 4.5L0 9Z" fill="#3f5a82"/></svg>
<svg class="a" style="left:64px;top:768px;" width="13" height="14" viewBox="0 0 13 14"><rect x="0.5" y="0.5" width="12" height="13" fill="#dde1ea" stroke="#7c8594"/><rect x="0" y="0" width="13" height="2" fill="#6f7a88"/><path d="M2 3.5H12M2 5.5H12M2 7.5H12M2 9.5H12M2 11.5H12" stroke="#7b8594" stroke-width="1" stroke-dasharray="2.5 0.5 3 0.5 3"/></svg>
<div class="t" style="left:84.00px;top:771px;font-size:11.1px;color:#000;">KvmHostAccess-Log</div>
<div class="a" style="left:64px;top:784px;width:14px;height:2px;overflow:hidden"><svg width="13" height="14" style="display:block"><rect x="0.5" y="0.5" width="12" height="13" fill="#dde1ea" stroke="#7c8594"/><rect x="0" y="0" width="13" height="2" fill="#6f7a88"/><path d="M2 3.5H12M2 5.5H12M2 7.5H12M2 9.5H12M2 11.5H12" stroke="#7b8594" stroke-width="1" stroke-dasharray="2.5 0.5 3 0.5 3"/></svg></div>
<div class="a" style="left:250px;top:176px;width:16px;height:610px;background:#f0f0f0;"></div>
<div class="a" style="left:250px;top:212px;width:16px;height:235px;background:#cdcdcd;"></div>
<svg class="a" style="left:252px;top:180px;" width="12" height="10" viewBox="0 0 12 10"><path d="M2 7L6 3L10 7" fill="none" stroke="#505050" stroke-width="1.6"/></svg>
<svg class="a" style="left:252px;top:772px;" width="12" height="10" viewBox="0 0 12 10"><path d="M2 3L6 7L10 3" fill="none" stroke="#505050" stroke-width="1.6"/></svg>
<div class="a" style="left:6px;top:786px;width:260px;height:19px;background:#e6e6e6;"></div>
<div class="t" style="left:13.00px;top:789px;font-size:11.7px;color:#1e1e1e;">Administration</div>
<div class="a" style="left:94px;top:786px;width:60px;height:19px;background:#fff;"></div>
<div class="t" style="left:101.00px;top:791px;font-size:10.3px;color:#2a7ad5;">Schemas</div>
<div class="a" style="left:6px;top:811px;width:260px;height:21px;background:#e6e6e6;"></div>
<div class="t" style="left:13.00px;top:816px;font-size:11.8px;color:#5a5a5a;">Information</div>
<svg class="a" style="left:75px;top:819px;" width="186" height="5" viewBox="0 0 186 5"><rect width="186" height="5" fill="url(#dp)"/></svg>
<div class="a" style="left:6px;top:832px;width:244px;height:161px;background:#fff;"></div>
<div class="a" style="left:250px;top:832px;width:16px;height:161px;background:#f0f0f0;"></div>
<div class="a" style="left:250px;top:849px;width:16px;height:100px;background:#cdcdcd;"></div>
<svg class="a" style="left:252px;top:836px;" width="12" height="10" viewBox="0 0 12 10"><path d="M2 7L6 3L10 7" fill="none" stroke="#505050" stroke-width="1.6"/></svg>
<svg class="a" style="left:252px;top:980px;" width="12" height="10" viewBox="0 0 12 10"><path d="M2 3L6 7L10 3" fill="none" stroke="#505050" stroke-width="1.6"/></svg>
<div class="t" style="left:29.00px;top:857px;font-size:12.0px;color:#000;font-weight:bold;">View:</div>
<div class="t" style="left:66.00px;top:857px;font-size:12.6px;color:#14891e;font-weight:bold;">GetDockerImageHierarchy</div>
<div class="t" style="left:29.00px;top:885px;font-size:12.0px;color:#000;font-weight:bold;">Columns:</div>
<div class="t" style="left:43.00px;top:900px;font-size:11.8px;color:#000;">CTE_i</div>
<div class="t" style="left:134.00px;top:899px;font-size:12.2px;color:#666;">int(11)</div>
<div class="t" style="left:43.00px;top:913px;font-size:11.8px;color:#000;">CTE_Id</div>
<div class="t" style="left:134.00px;top:912px;font-size:12.2px;color:#666;">varchar(255)</div>
<div class="t" style="left:43.00px;top:927px;font-size:11.8px;color:#000;">CTE_ParentID</div>
<div class="t" style="left:134.00px;top:926px;font-size:12.2px;color:#666;">varchar(1000)</div>
<div class="t" style="left:43.00px;top:940px;font-size:11.8px;color:#000;">CTE_ParentI</div>
<div class="t" style="left:134.00px;top:939px;font-size:12.2px;color:#666;">varchar(1000)</div>
<div class="t" style="left:43.00px;top:954px;font-size:11.8px;color:#000;">Hierarchy</div>
<div class="t" style="left:134.00px;top:953px;font-size:12.2px;color:#666;">varchar(1000)</div>
<div class="t" style="left:43.00px;top:967px;font-size:11.8px;color:#000;">Level</div>
<div class="t" style="left:134.00px;top:966px;font-size:12.2px;color:#666;">decimal(11,0)</div>
<div class="a" style="left:6px;top:993px;width:260px;height:19px;background:#e3e3e3;"></div>
<div class="a" style="left:6px;top:993px;width:72px;height:19px;background:#fff;"></div>
<div class="t" style="left:14.00px;top:997px;font-size:11.35px;color:#2a7ad5;">Object Info</div>
<div class="t" style="left:85.00px;top:997px;font-size:10.8px;color:#1e1e1e;">Session</div>
<div class="t" style="left:4.00px;top:1025px;font-size:11.85px;color:#333;">Query Completed</div>
<div class="a" style="left:272px;top:106px;width:1642px;height:19px;background:#e6e6e6;"></div>
<div class="a" style="left:272px;top:125px;width:1642px;height:2px;background:#ccd1db;"></div>
<div class="t" style="left:279.00px;top:110px;font-size:11.2px;color:#1e1e1e;">GetDockerImageHierarchy</div>
<div class="t" style="left:443.00px;top:110px;font-size:11.2px;color:#1e1e1e;">GetDockerImageHierarchy</div>
<div class="t" style="left:695.00px;top:110px;font-size:11.2px;color:#1e1e1e;">GetDockerImageHierarchy - View</div>
<div class="t" style="left:894.00px;top:110px;font-size:11.2px;color:#1e1e1e;">GetDockerImageHierarchy</div>
<div class="a" style="left:600px;top:106px;width:88px;height:19px;background:#cdd1da;"></div>
<div class="t" style="left:607.00px;top:110px;font-size:11.2px;color:#fafafa;">SQL File 7*</div>
<svg class="a" style="left:673px;top:112px;" width="9" height="9" viewBox="0 0 9 9"><path d="M1 1L8 8M8 1L1 8" stroke="#f0f0f0" stroke-width="0.9"/></svg>
<div class="a" style="left:272px;top:127px;width:1642px;height:26px;background:linear-gradient(#fafafa,#f7f7f7 40%,#ededee);"></div>
<svg class="a" style="left:284px;top:132px;" width="18" height="16" viewBox="0 0 18 16"><path d="M1.5 3.5Q1.5 2 3 2H6.5L8 3.5H15Q16.5 3.5 16.5 5V13.5Q16.5 14.5 15.5 14.5H2.5Q1.5 14.5 1.5 13.5Z" fill="url(#fg)" stroke="#6f8fae"/><defs><linearGradient id="fg" x1="0" y1="0" x2="0" y2="1"><stop offset="0" stop-color="#d5e6f4"/><stop offset="1" stop-color="#9cbcd8"/></linearGradient></defs></svg>
<svg class="a" style="left:312px;top:133px;" width="15" height="15" viewBox="0 0 15 15"><rect x="1" y="1" width="13" height="13" rx="1" fill="#4d7ba3" stroke="#2f5a80"/><rect x="3.5" y="2" width="8" height="5" fill="#fff"/><rect x="4" y="9.5" width="7" height="4.5" fill="#ccd9e6"/><rect x="7.5" y="10.5" width="2" height="3" fill="#2f5a80"/></svg>
<div class="a" style="left:337px;top:134px;width:1px;height:14px;background:#b9bec6;"></div>
<svg class="a" style="left:344px;top:132px;" width="17" height="18" viewBox="0 0 17 18"><path d="M7.5 1H16L11.5 7H15L4 17L7.5 9.5H3.5Z" fill="url(#bg1)" stroke="#b08d18" stroke-width="0.8"/><defs><linearGradient id="bg1" x1="0" y1="0" x2="0" y2="1"><stop offset="0" stop-color="#fff6b0"/><stop offset="1" stop-color="#e8b820"/></linearGradient></defs></svg>
<svg class="a" style="left:371px;top:132px;" width="17" height="18" viewBox="0 0 17 18"><path d="M7.5 1H16L11.5 7H15L4 17L7.5 9.5H3.5Z" fill="url(#bg2)" stroke="#b08d18" stroke-width="0.8"/><defs><linearGradient id="bg2" x1="0" y1="0" x2="0" y2="1"><stop offset="0" stop-color="#fff6b0"/><stop offset="1" stop-color="#e8b820"/></linearGradient></defs><path d="M8 7H11M9.5 7V15M8 15H11" stroke="#333" stroke-width="1.3"/></svg>
<svg class="a" style="left:397px;top:132px;" width="20" height="18" viewBox="0 0 20 18"><path d="M7.5 1H16L11.5 7H15L4 17L7.5 9.5H3.5Z" fill="url(#bg3)" stroke="#b08d18" stroke-width="0.8"/><defs><linearGradient id="bg3" x1="0" y1="0" x2="0" y2="1"><stop offset="0" stop-color="#fff6b0"/><stop offset="1" stop-color="#e8b820"/></linearGradient></defs><circle cx="9.5" cy="8" r="4.5" fill="#dfe9f5" stroke="#333" stroke-width="1.4"/><path d="M12.8 11.3L16.5 15" stroke="#333" stroke-width="2"/></svg>
<svg class="a" style="left:424px;top:132px;" width="18" height="18" viewBox="0 0 18 18"><path d="M5.5 1H12.5L17 5.5V12.5L12.5 17H5.5L1 12.5V5.5Z" fill="#c9c9c9" stroke="#b5b5b5"/><path d="M6 12V6.5M8 11V4.5M10 11V4.5M12 11.5V6M6 12Q7 15 10 15Q13 15 14 10" fill="none" stroke="#e8e8e8" stroke-width="1.3"/></svg>
<div class="a" style="left:451px;top:134px;width:1px;height:14px;background:#b9bec6;"></div>
<svg class="a" style="left:457px;top:131px;" width="19" height="19" viewBox="0 0 19 19"><rect x="0.5" y="0.5" width="18" height="18" rx="2" fill="#f2f2f2" stroke="#9a9a9a"/><circle cx="6" cy="6" r="4.2" fill="#d9202a"/><path d="M4 4L8 8M8 4L4 8" stroke="#fff" stroke-width="1.3"/><circle cx="12.5" cy="12.5" r="5" fill="#e23a2a"/><path d="M11 15V10.5M12.5 15V9.8M14 15V10.5" stroke="#fff" stroke-width="1"/><path d="M3 12V15H7" fill="none" stroke="#555"/></svg>
<div class="a" style="left:484px;top:134px;width:1px;height:14px;background:#b9bec6;"></div>
<svg class="a" style="left:490px;top:131px;" width="19" height="19" viewBox="0 0 19 19"><circle cx="9.5" cy="9.5" r="8.5" fill="#c9c9c9"/><path d="M5.5 9.5L8.5 12.5L13.5 6.5" fill="none" stroke="#eee" stroke-width="2"/></svg>
<svg class="a" style="left:517px;top:131px;" width="19" height="19" viewBox="0 0 19 19"><circle cx="9.5" cy="9.5" r="8.5" fill="#c9c9c9"/><path d="M6.5 6.5L12.5 12.5M12.5 6.5L6.5 12.5" stroke="#eee" stroke-width="2"/></svg>
<svg class="a" style="left:543px;top:130px;" width="24" height="22" viewBox="0 0 24 22"><rect x="0.5" y="0.5" width="22" height="21" fill="#dfe6ee" stroke="#1e6fd9"/><rect x="3" y="3" width="17" height="16" rx="1.5" fill="#c9c9c9" stroke="#8a8a8a"/><path d="M10 4H14L11 8H13L7 15L9 9H7Z" fill="#f3c84a"/><circle cx="13.5" cy="14" r="3.8" fill="#4a86d8"/><path d="M11.5 14L13 15.5L15.5 12.5" fill="none" stroke="#fff" stroke-width="1.1"/></svg>
<div class="a" style="left:572px;top:134px;width:1px;height:14px;background:#b9bec6;"></div>
<div class="a" style="left:576px;top:131px;width:121px;height:20px;background:#fff;"></div>
<div class="a" style="left:684px;top:133px;width:11px;height:16px;background:#f3f3f3;"></div>
<div class="t" style="left:580.00px;top:137px;font-size:10.35px;color:#000;">Limit to 1000 rows</div>
<svg class="a" style="left:685px;top:137px;" width="8" height="6" viewBox="0 0 8 6"><path d="M0.5 1H7.5L4 5Z" fill="#111"/></svg>
<div class="a" style="left:702px;top:134px;width:1px;height:14px;background:#b9bec6;"></div>
<svg class="a" style="left:709px;top:131px;" width="20" height="20" viewBox="0 0 20 20"><defs><linearGradient id="sg" x1="0" y1="0" x2="0" y2="1"><stop offset="0" stop-color="#ffe680"/><stop offset="1" stop-color="#e8a818"/></linearGradient></defs><path d="M8.5 2L10.8 7.1L16.3 7.7L12.2 11.4L13.3 16.8L8.5 14.1L3.7 16.8L4.8 11.4L0.7 7.7L6.2 7.1Z" fill="url(#sg)" stroke="#c08a10" stroke-width="0.6"/><path d="M13 10.5H16V13.5H19V16.5H16V19.5H13V16.5H10V13.5H13Z" fill="#b8e08a" stroke="#4f9a2a" stroke-width="1"/></svg>
<div class="a" style="left:735px;top:134px;width:1px;height:14px;background:#b9bec6;"></div>
<svg class="a" style="left:741px;top:131px;" width="19" height="19" viewBox="0 0 19 19"><path d="M1 11L9 4L13 8L6 14Z" fill="#d6b574" stroke="#9a7a3a" stroke-width="0.6"/><path d="M3 11.5L10 5.5M4.5 12.5L11 6.8M6 13.5L12 8" stroke="#a8844a" stroke-width="0.6"/><path d="M10.5 5L14.5 1.5L16 3L12 6.5" fill="#8a5a20"/><ellipse cx="8" cy="17.5" rx="7" ry="0.9" fill="#ddd"/></svg>
<svg class="a" style="left:767px;top:131px;" width="19" height="19" viewBox="0 0 19 19"><circle cx="7.5" cy="7.5" r="5.5" fill="#f6f6f6" stroke="#555" stroke-width="1.3"/><text x="5" y="10" font-family="Liberation Sans" font-size="6" fill="#777">A</text><path d="M11.5 11.5L16.5 16.5" stroke="#444" stroke-width="2.2"/></svg>
<svg class="a" style="left:795px;top:131px;" width="17" height="20" viewBox="0 0 17 20"><rect x="0.5" y="1.5" width="15" height="17" rx="2" fill="#f6f6f6" stroke="#8a8a8a"/><path d="M8 4.5H12.5M8.5 4.5V16M11.5 4.5V16" stroke="#333" stroke-width="1.3"/><path d="M8.5 4.5Q4.5 4.5 4.5 7.2Q4.5 10 8.5 10Z" fill="#333"/></svg>
<svg class="a" style="left:822px;top:131px;" width="17" height="20" viewBox="0 0 17 20"><rect x="0.5" y="1.5" width="15" height="17" rx="2" fill="#f6f6f6" stroke="#8a8a8a"/><path d="M4 6H11V12H5" fill="none" stroke="#333" stroke-width="1.4"/><path d="M7 9.5L4.5 12L7 14.5" fill="none" stroke="#333" stroke-width="1.4"/></svg>
<div class="a" style="left:272px;top:153px;width:1642px;height:214px;background:#fff;"></div>
<div class="t" style="left:297.50px;top:160px;font-size:12.5px;color:#1a7fc0;font-family:'Liberation Mono',monospace;transform:scaleX(0.9333);transform-origin:0 0;-webkit-text-stroke:0.2px currentColor;">1</div>
<div class="t" style="left:297.50px;top:181px;font-size:12.5px;color:#1a7fc0;font-family:'Liberation Mono',monospace;transform:scaleX(0.9333);transform-origin:0 0;-webkit-text-stroke:0.2px currentColor;">2</div>
<div class="t" style="left:297.50px;top:202px;font-size:12.5px;color:#1a7fc0;font-family:'Liberation Mono',monospace;transform:scaleX(0.9333);transform-origin:0 0;-webkit-text-stroke:0.2px currentColor;">3</div>
<div class="t" style="left:297.50px;top:223px;font-size:12.5px;color:#1a7fc0;font-family:'Liberation Mono',monospace;transform:scaleX(0.9333);transform-origin:0 0;-webkit-text-stroke:0.2px currentColor;">4</div>
<div class="t" style="left:297.50px;top:244px;font-size:12.5px;color:#1a7fc0;font-family:'Liberation Mono',monospace;transform:scaleX(0.9333);transform-origin:0 0;-webkit-text-stroke:0.2px currentColor;">5</div>
<div class="t" style="left:297.50px;top:265px;font-size:12.5px;color:#1a7fc0;font-family:'Liberation Mono',monospace;transform:scaleX(0.9333);transform-origin:0 0;-webkit-text-stroke:0.2px currentColor;">6</div>
<div class="t" style="left:297.50px;top:286px;font-size:12.5px;color:#1a7fc0;font-family:'Liberation Mono',monospace;transform:scaleX(0.9333);transform-origin:0 0;-webkit-text-stroke:0.2px currentColor;">7</div>
<div class="t" style="left:297.50px;top:307px;font-size:12.5px;color:#1a7fc0;font-family:'Liberation Mono',monospace;transform:scaleX(0.9333);transform-origin:0 0;-webkit-text-stroke:0.2px currentColor;">8</div>
<svg class="a" style="left:311px;top:160px;" width="8" height="8" viewBox="0 0 8 8"><circle cx="4" cy="4" r="3.5" fill="#0a7ae8"/></svg>
<svg class="a" style="left:322px;top:198px;" width="16" height="76" viewBox="0 0 16 76"><circle cx="7.5" cy="8" r="5" fill="#fff" stroke="#a5a59a"/><path d="M5 8H10" stroke="#a5a59a"/><circle cx="7.5" cy="29" r="5" fill="#fff" stroke="#a5a59a"/><path d="M5 29H10" stroke="#a5a59a"/><path d="M7.5 13V24M7.5 34V68Q7.5 71 10 71H13M7.5 48Q7.5 50 10 50H13" fill="none" stroke="#a5a59a"/></svg>
<div class="t" style="left:342.00px;top:160px;font-size:12.5px;color:#1a7fc0;font-family:'Liberation Mono',monospace;transform:scaleX(0.9333);transform-origin:0 0;-webkit-text-stroke:0.2px currentColor;">SELECT</div>
<div class="t" style="left:342.00px;top:181px;font-size:12.5px;color:#101010;font-family:'Liberation Mono',monospace;transform:scaleX(0.9333);transform-origin:0 0;-webkit-text-stroke:0.2px currentColor;">Hierarchy,</div>
<div class="t" style="left:342.00px;top:202px;font-size:12.5px;color:#101010;font-family:'Liberation Mono',monospace;transform:scaleX(0.9333);transform-origin:0 0;-webkit-text-stroke:0.2px currentColor;">    ROUND (</div>
<div class="t" style="left:342.00px;top:223px;font-size:12.5px;color:#101010;font-family:'Liberation Mono',monospace;transform:scaleX(0.9333);transform-origin:0 0;-webkit-text-stroke:0.2px currentColor;">              (</div>
<div class="t" style="left:447.00px;top:223px;font-size:12.5px;color:#8a8a8a;font-family:'Liberation Mono',monospace;transform:scaleX(0.9333);transform-origin:0 0;-webkit-text-stroke:0.2px currentColor;">LENGTH</div>
<div class="t" style="left:489.00px;top:223px;font-size:12.5px;color:#101010;font-family:'Liberation Mono',monospace;transform:scaleX(0.9333);transform-origin:0 0;-webkit-text-stroke:0.2px currentColor;">(Hierarchy) - </div>
<div class="t" style="left:587.00px;top:223px;font-size:12.5px;color:#8a8a8a;font-family:'Liberation Mono',monospace;transform:scaleX(0.9333);transform-origin:0 0;-webkit-text-stroke:0.2px currentColor;">LENGTH</div>
<div class="t" style="left:629.00px;top:223px;font-size:12.5px;color:#101010;font-family:'Liberation Mono',monospace;transform:scaleX(0.9333);transform-origin:0 0;-webkit-text-stroke:0.2px currentColor;">( </div>
<div class="t" style="left:643.00px;top:223px;font-size:12.5px;color:#1a7fc0;font-family:'Liberation Mono',monospace;transform:scaleX(0.9333);transform-origin:0 0;-webkit-text-stroke:0.2px currentColor;">REPLACE</div>
<div class="t" style="left:692.00px;top:223px;font-size:12.5px;color:#101010;font-family:'Liberation Mono',monospace;transform:scaleX(0.9333);transform-origin:0 0;-webkit-text-stroke:0.2px currentColor;"> ( Hierarchy, </div>
<div class="t" style="left:790.00px;top:223px;font-size:12.5px;color:#e88a1a;font-family:'Liberation Mono',monospace;transform:scaleX(0.9333);transform-origin:0 0;-webkit-text-stroke:0.2px currentColor;">&quot;-&quot;</div>
<div class="t" style="left:811.00px;top:223px;font-size:12.5px;color:#101010;font-family:'Liberation Mono',monospace;transform:scaleX(0.9333);transform-origin:0 0;-webkit-text-stroke:0.2px currentColor;">, </div>
<div class="t" style="left:825.00px;top:223px;font-size:12.5px;color:#e88a1a;font-family:'Liberation Mono',monospace;transform:scaleX(0.9333);transform-origin:0 0;-webkit-text-stroke:0.2px currentColor;">&quot;&quot;</div>
<div class="t" style="left:839.00px;top:223px;font-size:12.5px;color:#101010;font-family:'Liberation Mono',monospace;transform:scaleX(0.9333);transform-origin:0 0;-webkit-text-stroke:0.2px currentColor;">) )</div>
<div class="t" style="left:342.00px;top:244px;font-size:12.5px;color:#101010;font-family:'Liberation Mono',monospace;transform:scaleX(0.9333);transform-origin:0 0;-webkit-text-stroke:0.2px currentColor;">          ) / </div>
<div class="t" style="left:440.00px;top:244px;font-size:12.5px;color:#8a8a8a;font-family:'Liberation Mono',monospace;transform:scaleX(0.9333);transform-origin:0 0;-webkit-text-stroke:0.2px currentColor;">LENGTH</div>
<div class="t" style="left:482.00px;top:244px;font-size:12.5px;color:#101010;font-family:'Liberation Mono',monospace;transform:scaleX(0.9333);transform-origin:0 0;-webkit-text-stroke:0.2px currentColor;">(</div>
<div class="t" style="left:489.00px;top:244px;font-size:12.5px;color:#e88a1a;font-family:'Liberation Mono',monospace;transform:scaleX(0.9333);transform-origin:0 0;-webkit-text-stroke:0.2px currentColor;">&quot;-&quot;</div>
<div class="t" style="left:510.00px;top:244px;font-size:12.5px;color:#101010;font-family:'Liberation Mono',monospace;transform:scaleX(0.9333);transform-origin:0 0;-webkit-text-stroke:0.2px currentColor;">)</div>
<div class="t" style="left:342.00px;top:265px;font-size:12.5px;color:#101010;font-family:'Liberation Mono',monospace;transform:scaleX(0.9333);transform-origin:0 0;-webkit-text-stroke:0.2px currentColor;">          ) </div>
<div class="t" style="left:426.00px;top:265px;font-size:12.5px;color:#1a7fc0;font-family:'Liberation Mono',monospace;transform:scaleX(0.9333);transform-origin:0 0;-webkit-text-stroke:0.2px currentColor;">AS Level</div>
<div class="t" style="left:342.00px;top:286px;font-size:12.5px;color:#1a7fc0;font-family:'Liberation Mono',monospace;transform:scaleX(0.9333);transform-origin:0 0;-webkit-text-stroke:0.2px currentColor;">FROM</div>
<div class="t" style="left:370.00px;top:286px;font-size:12.5px;color:#101010;font-family:'Liberation Mono',monospace;transform:scaleX(0.9333);transform-origin:0 0;-webkit-text-stroke:0.2px currentColor;"> cryptochestmax.GetDockerImageHierarchy</div>
<div class="t" style="left:342.00px;top:307px;font-size:12.5px;color:#1a7fc0;font-family:'Liberation Mono',monospace;transform:scaleX(0.9333);transform-origin:0 0;-webkit-text-stroke:0.2px currentColor;">where</div>
<div class="t" style="left:377.00px;top:307px;font-size:12.5px;color:#101010;font-family:'Liberation Mono',monospace;transform:scaleX(0.9333);transform-origin:0 0;-webkit-text-stroke:0.2px currentColor;"> Hierarchy </div>
<div class="t" style="left:454.00px;top:307px;font-size:12.5px;color:#1a7fc0;font-family:'Liberation Mono',monospace;transform:scaleX(0.9333);transform-origin:0 0;-webkit-text-stroke:0.2px currentColor;">LIKE</div>
<div class="t" style="left:489.00px;top:307px;font-size:12.5px;color:#e88a1a;font-family:'Liberation Mono',monospace;transform:scaleX(0.9333);transform-origin:0 0;-webkit-text-stroke:0.2px currentColor;">&#x27;%285%&#x27;</div>
<div class="t" style="left:538.00px;top:307px;font-size:12.5px;color:#101010;font-family:'Liberation Mono',monospace;transform:scaleX(0.9333);transform-origin:0 0;-webkit-text-stroke:0.2px currentColor;">;</div>
<div class="a" style="left:272px;top:367px;width:1642px;height:22px;background:#f0f0f0;"></div>
<div class="a" style="left:289px;top:367px;width:1261px;height:15px;background:#cdcdcd;"></div>
<svg class="a" style="left:275px;top:369px;" width="10" height="11" viewBox="0 0 10 11"><path d="M7 1.5L3 5.5L7 9.5" fill="none" stroke="#505050" stroke-width="1.6"/></svg>
<svg class="a" style="left:1901px;top:369px;" width="10" height="11" viewBox="0 0 10 11"><path d="M3 1.5L7 5.5L3 9.5" fill="none" stroke="#505050" stroke-width="1.6"/></svg>
<div class="a" style="left:272px;top:389px;width:1584px;height:23px;background:#f3f3f6;"></div>
<div class="a" style="left:275px;top:393px;width:1px;height:15px;background:#8d9bb0;"></div>
<div class="t" style="left:283.00px;top:397px;font-size:10.1px;color:#1e1e1e;font-weight:bold;">Result Grid</div>
<div class="a" style="left:344px;top:393px;width:1px;height:15px;background:#8d9bb0;"></div>
<svg class="a" style="left:350px;top:392px;" width="15" height="16" viewBox="0 0 15 16"><rect x="0.5" y="0.5" width="13" height="14" fill="#f6f6f6" stroke="#8a8a8a"/><path d="M1 4H13M1 7.5H13M1 11H13" stroke="#aaa" stroke-width="0.8"/><rect x="5" y="1" width="4" height="13" fill="#f7d24a" stroke="#d49a10" stroke-width="0.7"/></svg>
<svg class="a" style="left:378px;top:392px;" width="18" height="16" viewBox="0 0 18 16"><path d="M1 7L7 1.5L8 8Z" fill="#2f7fd8"/><path d="M6.5 5Q5.5 10.5 11 13" fill="none" stroke="#2f7fd8" stroke-width="2.6"/><path d="M17 9L11 14.5L10 8Z" fill="#2a66b8"/><path d="M11.5 11Q12.5 5.5 7 3" fill="none" stroke="#2a66b8" stroke-width="2.6"/></svg>
<div class="t" style="left:403.00px;top:396px;font-size:11.0px;color:#1e1e1e;transform:scaleX(0.8956);transform-origin:0 0;">Filter Rows:</div>
<div class="a" style="left:460px;top:390px;width:100px;height:20px;border:1px solid #7a7a7a;background:#fff"></div>
<div class="a" style="left:564px;top:393px;width:1px;height:15px;background:#8d9bb0;"></div>
<div class="t" style="left:569.00px;top:396px;font-size:11.0px;color:#1e1e1e;transform:scaleX(0.9527);transform-origin:0 0;">Export:</div>
<svg class="a" style="left:609px;top:391px;" width="20" height="19" viewBox="0 0 20 19"><rect x="0.5" y="0.5" width="12" height="11" fill="#eee" stroke="#9a9a9a"/><path d="M0.5 4H12.5M0.5 7.5H12.5M4.5 0.5V11.5M8.5 0.5V11.5" stroke="#aaa" stroke-width="0.8"/><rect x="7" y="7" width="11" height="11" rx="1" fill="#4d7ba3" stroke="#2f5a80"/><rect x="9" y="8" width="7" height="3.5" fill="#fff"/><rect x="9.5" y="13.5" width="6" height="4" fill="#ccd9e6"/></svg>
<div class="a" style="left:636px;top:393px;width:1px;height:15px;background:#8d9bb0;"></div>
<div class="t" style="left:641.00px;top:396px;font-size:11.0px;color:#1e1e1e;transform:scaleX(0.9242);transform-origin:0 0;">Wrap Cell Content:</div>
<svg class="a" style="left:736px;top:393px;" width="14" height="15" viewBox="0 0 14 15"><path d="M2.5 1H6.5M4.5 1V14M2.5 14H6.5M3 4L4.5 2L6 4M3 11L4.5 13L6 11" fill="none" stroke="#333" stroke-width="1"/><text x="6.5" y="11" font-family="Liberation Sans" font-size="9" fill="#333">A</text><path d="M7 13.5H13" stroke="#333"/></svg>
<svg class="a" style="left:1834px;top:392px;" width="16" height="16" viewBox="0 0 16 16"><rect x="1.5" y="1.5" width="13" height="13" fill="#fff" stroke="#444"/><rect x="9" y="1.5" width="5.5" height="13" fill="#555"/></svg>
<div class="a" style="left:272px;top:412px;width:1584px;height:490px;background:#fff;"></div>
<div class="a" style="left:272px;top:412px;width:425px;height:1px;background:#999;"></div>
<div class="a" style="left:272px;top:432px;width:425px;height:1px;background:#999;"></div>
<div class="a" style="left:272px;top:412px;width:1px;height:327px;background:#999;"></div>
<div class="a" style="left:297px;top:412px;width:1px;height:327px;background:#a0a0a0;"></div>
<div class="a" style="left:654px;top:414px;width:1px;height:17px;background:#d0d0d0;"></div>
<div class="a" style="left:696px;top:414px;width:1px;height:17px;background:#d0d0d0;"></div>
<div class="t" style="left:304.00px;top:418px;font-size:11.0px;color:#1e1e1e;">Hierarchy</div>
<div class="t" style="left:661.00px;top:418px;font-size:11.0px;color:#1e1e1e;">Level</div>
<div class="a" style="left:274px;top:449px;width:23px;height:1px;background:#dcdcdc;"></div>
<div class="t" style="left:301.00px;top:437px;font-size:10.95px;color:#000;">69-285</div>
<div class="t" style="left:659.00px;top:437px;font-size:10.95px;color:#000;">1</div>
<div class="a" style="left:298px;top:450px;width:356px;height:16px;background:#ebf1fb;"></div>
<div class="a" style="left:655px;top:450px;width:41px;height:16px;background:#ebf1fb;"></div>
<div class="a" style="left:274px;top:466px;width:23px;height:1px;background:#dcdcdc;"></div>
<div class="t" style="left:301.00px;top:454px;font-size:10.95px;color:#000;">353-285</div>
<div class="t" style="left:659.00px;top:454px;font-size:10.95px;color:#000;">1</div>
<div class="a" style="left:274px;top:483px;width:23px;height:1px;background:#dcdcdc;"></div>
<div class="t" style="left:301.00px;top:471px;font-size:10.95px;color:#000;">69-285-286</div>
<div class="t" style="left:659.00px;top:471px;font-size:10.95px;color:#000;">2</div>
<div class="a" style="left:298px;top:484px;width:356px;height:16px;background:#ebf1fb;"></div>
<div class="a" style="left:655px;top:484px;width:41px;height:16px;background:#ebf1fb;"></div>
<div class="a" style="left:274px;top:500px;width:23px;height:1px;background:#dcdcdc;"></div>
<div class="t" style="left:301.00px;top:488px;font-size:10.95px;color:#000;">353-285-286</div>
<div class="t" style="left:659.00px;top:488px;font-size:10.95px;color:#000;">2</div>
<div class="a" style="left:274px;top:517px;width:23px;height:1px;background:#dcdcdc;"></div>
<div class="t" style="left:301.00px;top:505px;font-size:10.95px;color:#000;">69-285-286-284</div>
<div class="t" style="left:659.00px;top:505px;font-size:10.95px;color:#000;">3</div>
<div class="a" style="left:298px;top:518px;width:356px;height:16px;background:#ebf1fb;"></div>
<div class="a" style="left:655px;top:518px;width:41px;height:16px;background:#ebf1fb;"></div>
<div class="a" style="left:274px;top:534px;width:23px;height:1px;background:#dcdcdc;"></div>
<div class="t" style="left:301.00px;top:522px;font-size:10.95px;color:#000;">353-285-286-284</div>
<div class="t" style="left:659.00px;top:522px;font-size:10.95px;color:#000;">3</div>
<div class="a" style="left:274px;top:551px;width:23px;height:1px;background:#dcdcdc;"></div>
<div class="t" style="left:301.00px;top:539px;font-size:10.95px;color:#000;">69-285-286-284-283</div>
<div class="t" style="left:659.00px;top:539px;font-size:10.95px;color:#000;">4</div>
<div class="a" style="left:298px;top:552px;width:356px;height:16px;background:#ebf1fb;"></div>
<div class="a" style="left:655px;top:552px;width:41px;height:16px;background:#ebf1fb;"></div>
<div class="a" style="left:274px;top:568px;width:23px;height:1px;background:#dcdcdc;"></div>
<div class="t" style="left:301.00px;top:556px;font-size:10.95px;color:#000;">353-285-286-284-283</div>
<div class="t" style="left:659.00px;top:556px;font-size:10.95px;color:#000;">4</div>
<div class="a" style="left:274px;top:585px;width:23px;height:1px;background:#dcdcdc;"></div>
<div class="t" style="left:301.00px;top:573px;font-size:10.95px;color:#000;">69-285-286-284-283-282</div>
<div class="t" style="left:659.00px;top:573px;font-size:10.95px;color:#000;">5</div>
<div class="a" style="left:298px;top:586px;width:356px;height:16px;background:#ebf1fb;"></div>
<div class="a" style="left:655px;top:586px;width:41px;height:16px;background:#ebf1fb;"></div>
<div class="a" style="left:274px;top:602px;width:23px;height:1px;background:#dcdcdc;"></div>
<div class="t" style="left:301.00px;top:590px;font-size:10.95px;color:#000;">353-285-286-284-283-282</div>
<div class="t" style="left:659.00px;top:590px;font-size:10.95px;color:#000;">5</div>
<div class="a" style="left:274px;top:619px;width:23px;height:1px;background:#dcdcdc;"></div>
<div class="t" style="left:301.00px;top:607px;font-size:10.95px;color:#000;">69-285-286-284-283-282-281</div>
<div class="t" style="left:659.00px;top:607px;font-size:10.95px;color:#000;">6</div>
<div class="a" style="left:298px;top:620px;width:356px;height:16px;background:#ebf1fb;"></div>
<div class="a" style="left:655px;top:620px;width:41px;height:16px;background:#ebf1fb;"></div>
<div class="a" style="left:274px;top:636px;width:23px;height:1px;background:#dcdcdc;"></div>
<div class="t" style="left:301.00px;top:624px;font-size:10.95px;color:#000;">353-285-286-284-283-282-281</div>
<div class="t" style="left:659.00px;top:624px;font-size:10.95px;color:#000;">6</div>
<div class="a" style="left:274px;top:653px;width:23px;height:1px;background:#dcdcdc;"></div>
<div class="t" style="left:301.00px;top:641px;font-size:10.95px;color:#000;">69-285-286-284-283-282-281-279</div>
<div class="t" style="left:659.00px;top:641px;font-size:10.95px;color:#000;">7</div>
<div class="a" style="left:298px;top:654px;width:356px;height:16px;background:#ebf1fb;"></div>
<div class="a" style="left:655px;top:654px;width:41px;height:16px;background:#ebf1fb;"></div>
<div class="a" style="left:274px;top:670px;width:23px;height:1px;background:#dcdcdc;"></div>
<div class="t" style="left:301.00px;top:658px;font-size:10.95px;color:#000;">353-285-286-284-283-282-281-279</div>
<div class="t" style="left:659.00px;top:658px;font-size:10.95px;color:#000;">7</div>
<div class="a" style="left:274px;top:687px;width:23px;height:1px;background:#dcdcdc;"></div>
<div class="t" style="left:301.00px;top:675px;font-size:10.95px;color:#000;">69-285-286-284-283-282-281-279-280</div>
<div class="t" style="left:659.00px;top:675px;font-size:10.95px;color:#000;">8</div>
<div class="a" style="left:298px;top:688px;width:356px;height:16px;background:#ebf1fb;"></div>
<div class="a" style="left:655px;top:688px;width:41px;height:16px;background:#ebf1fb;"></div>
<div class="a" style="left:274px;top:704px;width:23px;height:1px;background:#dcdcdc;"></div>
<div class="t" style="left:301.00px;top:692px;font-size:10.95px;color:#000;">353-285-286-284-283-282-281-279-280</div>
<div class="t" style="left:659.00px;top:692px;font-size:10.95px;color:#000;">8</div>
<div class="a" style="left:274px;top:721px;width:23px;height:1px;background:#dcdcdc;"></div>
<div class="t" style="left:301.00px;top:709px;font-size:10.95px;color:#000;">69-285-286-284-283-282-281-279-280-278</div>
<div class="t" style="left:659.00px;top:709px;font-size:10.95px;color:#000;">9</div>
<div class="a" style="left:298px;top:722px;width:356px;height:16px;background:#ebf1fb;"></div>
<div class="a" style="left:655px;top:722px;width:41px;height:16px;background:#ebf1fb;"></div>
<div class="a" style="left:274px;top:738px;width:23px;height:1px;background:#dcdcdc;"></div>
<div class="t" style="left:301.00px;top:726px;font-size:10.95px;color:#000;">353-285-286-284-283-282-281-279-280-278</div>
<div class="t" style="left:659.00px;top:726px;font-size:10.95px;color:#000;">9</div>
<svg class="a" style="left:278px;top:437px;" width="8" height="10" viewBox="0 0 8 10"><path d="M1 0.5L6.5 5L1 9.5Z" fill="#333"/></svg>
<div class="a" style="left:1856px;top:389px;width:58px;height:513px;background:#e6e6e6;"></div>
<div class="a" style="left:1856px;top:389px;width:58px;height:68px;background:#0078d7;clip-path:polygon(0 0,58px 0,58px 68px,0 68px,0 45px,9px 36px,0 27px)"></div>
<svg class="a" style="left:1871px;top:392px;" width="30" height="32" viewBox="0 0 30 32"><rect x="1" y="1" width="28" height="30" rx="2" fill="#f2f2f2" stroke="#dfe7f0"/><rect x="3" y="5" width="24" height="24" fill="#0b4a8c"/><path d="M4.5 8.5H25.5M4.5 12.5H25.5M4.5 16.5H25.5M4.5 20.5H25.5M4.5 24.5H25.5" stroke="#fff" stroke-width="2"/><path d="M11 7V27M19 7V27" stroke="#0b4a8c" stroke-width="1.4"/></svg>
<div class="t" style="left:1872.00px;top:428px;font-size:10.0px;color:#fff;">Result</div>
<div class="t" style="left:1875.00px;top:439px;font-size:10.0px;color:#fff;">Grid</div>
<svg class="a" style="left:1872px;top:461px;" width="28" height="30" viewBox="0 0 28 30"><rect x="1" y="1" width="26" height="27" rx="1.5" fill="#ebebeb" stroke="#dadada"/><rect x="3.5" y="4.5" width="20" height="20" fill="#e9e9e9" stroke="#d3d3d3"/><path d="M5 8H10M5 11H10M5 17H10M5 20H10" stroke="#d0d0d0" stroke-width="1.2"/><rect x="12" y="7.5" width="10" height="9" fill="none" stroke="#d0d0d0"/><rect x="12" y="17.5" width="10" height="5" fill="none" stroke="#d0d0d0"/></svg>
<svg class="a" style="left:1872px;top:529px;" width="28" height="30" viewBox="0 0 28 30"><rect x="1" y="1" width="26" height="27" rx="1.5" fill="#ebebeb" stroke="#dadada"/><rect x="3.5" y="4.5" width="20" height="20" fill="#e9e9e9" stroke="#d3d3d3"/><path d="M5 9H22M5 12.5H22M5 16H22M5 19.5H22M5 23H22" stroke="#d0d0d0" stroke-width="1.3"/><circle cx="20" cy="9" r="5.5" fill="#ececec" stroke="#d0d0d0" stroke-width="1.6"/><path d="M23.5 12.5L27 16" stroke="#d0d0d0" stroke-width="2"/></svg>
<svg class="a" style="left:1872px;top:597px;" width="28" height="30" viewBox="0 0 28 30"><rect x="1" y="1" width="26" height="27" rx="1.5" fill="#ebebeb" stroke="#dadada"/><rect x="3.5" y="4.5" width="20" height="20" fill="#e9e9e9" stroke="#d3d3d3"/><path d="M5 9H22M5 12.5H22M5 16H22M5 19.5H22M5 23H22" stroke="#d0d0d0" stroke-width="1.3"/><circle cx="20" cy="11" r="6" fill="#ececec" stroke="#d0d0d0" stroke-width="1.6"/><path d="M20 8V11.5H22.5" fill="none" stroke="#d0d0d0"/></svg>
<svg class="a" style="left:1872px;top:665px;" width="28" height="30" viewBox="0 0 28 30"><rect x="3" y="2" width="5" height="3" fill="#dcdcdc"/><rect x="3" y="7" width="5" height="3" fill="#dcdcdc"/><path d="M5.5 5V7M5.5 10V14" stroke="#d6d6d6"/><path d="M2 14H25M2 14V18M11 14V18M20 14V18" fill="none" stroke="#d6d6d6"/><rect x="1" y="19" width="6" height="3" fill="#dcdcdc"/><rect x="10" y="19" width="6" height="3" fill="#dcdcdc"/><rect x="19" y="19" width="6" height="3" fill="#dcdcdc"/></svg>
<div class="t" style="left:1873.33px;top:495px;font-size:10.0px;color:#5a5a5a;">Form</div>
<div class="t" style="left:1871.94px;top:505px;font-size:10.0px;color:#5a5a5a;">Editor</div>
<div class="t" style="left:1874.16px;top:563px;font-size:10.0px;color:#5a5a5a;">Field</div>
<div class="t" style="left:1871.66px;top:573px;font-size:10.0px;color:#5a5a5a;">Types</div>
<div class="t" style="left:1871.38px;top:631px;font-size:10.0px;color:#5a5a5a;">Query</div>
<div class="t" style="left:1873.61px;top:641px;font-size:10.0px;color:#5a5a5a;">Stats</div>
<div class="t" style="left:1863.04px;top:699px;font-size:10.0px;color:#5a5a5a;">Execution</div>
<div class="t" style="left:1874.99px;top:709px;font-size:10.0px;color:#5a5a5a;">Plan</div>
<div class="a" style="left:272px;top:902px;width:1642px;height:19px;background:#e6e6e6;"></div>
<div class="a" style="left:272px;top:902px;width:71px;height:19px;background:#fff;"></div>
<div class="t" style="left:279.00px;top:906px;font-size:11.0px;color:#2a7ad5;">Result 3</div>
<svg class="a" style="left:328px;top:908px;" width="9" height="9" viewBox="0 0 9 9"><path d="M1 1.5L8 8.5M8 1.5L1 8.5" stroke="#555" stroke-width="1"/></svg>
<svg class="a" style="left:1840px;top:906px;" width="10" height="10" viewBox="0 0 10 10"><path d="M3 0H7L10 3V7L7 10H3L0 7V3Z" fill="#2f7fd8"/><rect x="4.2" y="1.8" width="1.6" height="4.2" fill="#fff"/><rect x="4.2" y="7" width="1.6" height="1.5" fill="#fff"/></svg>
<div class="t" style="left:1859.50px;top:908px;font-size:10.35px;color:#111;">Read Only</div>
<div class="a" style="left:272px;top:921px;width:1642px;height:6px;background:#fff;"></div>
<svg class="a" style="left:273px;top:921px;" width="1640" height="6" viewBox="0 0 1640 6"><rect x="0" y="1" width="1640" height="1" fill="url(#sd1)"/><rect x="1" y="4" width="1638" height="1" fill="url(#sd1)"/></svg>
<div class="a" style="left:272px;top:927px;width:1642px;height:20px;background:#e6e6e6;"></div>
<div class="t" style="left:279.00px;top:932px;font-size:10.85px;color:#5a5a5a;">Output</div>
<svg class="a" style="left:314.5px;top:935px;" width="1594.5" height="5" viewBox="0 0 1594.5 5"><rect width="1594" height="5" fill="url(#dp)"/></svg>
<div class="a" style="left:272px;top:947px;width:1642px;height:28px;background:#f3f3f6;"></div>
<svg class="a" style="left:279px;top:952px;" width="16" height="18" viewBox="0 0 16 18"><rect x="1.5" y="7.5" width="8" height="9" fill="#fff" stroke="#333"/><path d="M4 5.5H11.5V14M6.5 3.5H13.5V12" fill="none" stroke="#333"/></svg>
<div class="a" style="left:300px;top:952px;width:150px;height:21px;background:#fff;"></div>
<div class="a" style="left:438px;top:953px;width:11px;height:19px;background:#efefef;"></div>
<div class="t" style="left:304.00px;top:958px;font-size:10.55px;color:#000;">Action Output</div>
<svg class="a" style="left:439px;top:959px;" width="8" height="6" viewBox="0 0 8 6"><path d="M0.5 1H7.5L4 5Z" fill="#111"/></svg>
<div class="a" style="left:272px;top:975px;width:1625px;height:19px;background:#fff;"></div>
<div class="a" style="left:272px;top:994px;width:1625px;height:18px;background:#eaf1fb;"></div>
<div class="a" style="left:293px;top:976px;width:1px;height:36px;background:#e2e2e2;"></div>
<div class="a" style="left:329px;top:976px;width:1px;height:36px;background:#e2e2e2;"></div>
<div class="a" style="left:380px;top:976px;width:1px;height:36px;background:#e2e2e2;"></div>
<div class="a" style="left:1081px;top:976px;width:1px;height:36px;background:#e2e2e2;"></div>
<div class="a" style="left:1783px;top:976px;width:1px;height:36px;background:#e2e2e2;"></div>
<div class="t" style="left:300.00px;top:982px;font-size:9.3px;color:#1e1e1e;">#</div>
<div class="t" style="left:337.00px;top:982px;font-size:9.3px;color:#1e1e1e;">Time</div>
<div class="t" style="left:388.00px;top:982px;font-size:9.3px;color:#1e1e1e;">Action</div>
<div class="t" style="left:1088.00px;top:982px;font-size:9.35px;color:#1e1e1e;">Message</div>
<div class="t" style="left:1790.00px;top:981px;font-size:10.0px;color:#1e1e1e;">Duration / Fetch</div>
<svg class="a" style="left:276px;top:998px;" width="13" height="13" viewBox="0 0 13 13"><circle cx="6.5" cy="6.2" r="5.5" fill="#1a9e25"/><path d="M3.8 6.3L5.8 8.3L9.3 4.5" fill="none" stroke="#fff" stroke-width="1.7"/></svg>
<div class="t" style="right:1595.00px;top:998px;font-size:10.6px;color:#000;">74</div>
<div class="t" style="left:334.00px;top:998px;font-size:10.55px;color:#000;">17:54:58</div>
<div class="t" style="left:384.00px;top:998px;font-size:10.65px;color:#000;">SELECT * FROM cryptochestmax.GetDockerImageHierarchy LIMIT 0, 1000</div>
<div class="t" style="left:1086.00px;top:999px;font-size:10.25px;color:#000;">195 row(s) returned</div>
<div class="t" style="left:1788.00px;top:998px;font-size:10.8px;color:#000;">0.125 sec / 0.016 sec</div>
<div class="a" style="left:1897px;top:975px;width:15px;height:37px;background:#f0f0f0;"></div>
<svg class="a" style="left:1899px;top:980px;" width="12" height="10" viewBox="0 0 12 10"><path d="M2 7L6 3L10 7" fill="none" stroke="#505050" stroke-width="1.6"/></svg>
<svg class="a" style="left:1880px;top:1021px;" width="20" height="16" viewBox="0 0 20 16"><path d="M1.5 2V14" stroke="#999"/><rect x="5.5" y="3.5" width="10" height="10" fill="#fff" stroke="#555"/><path d="M7.5 6H13.5M7.5 8.5H13.5M7.5 11H13.5" stroke="#555"/><path d="M18.5 2V14" stroke="#999"/></svg>
</body></html>
